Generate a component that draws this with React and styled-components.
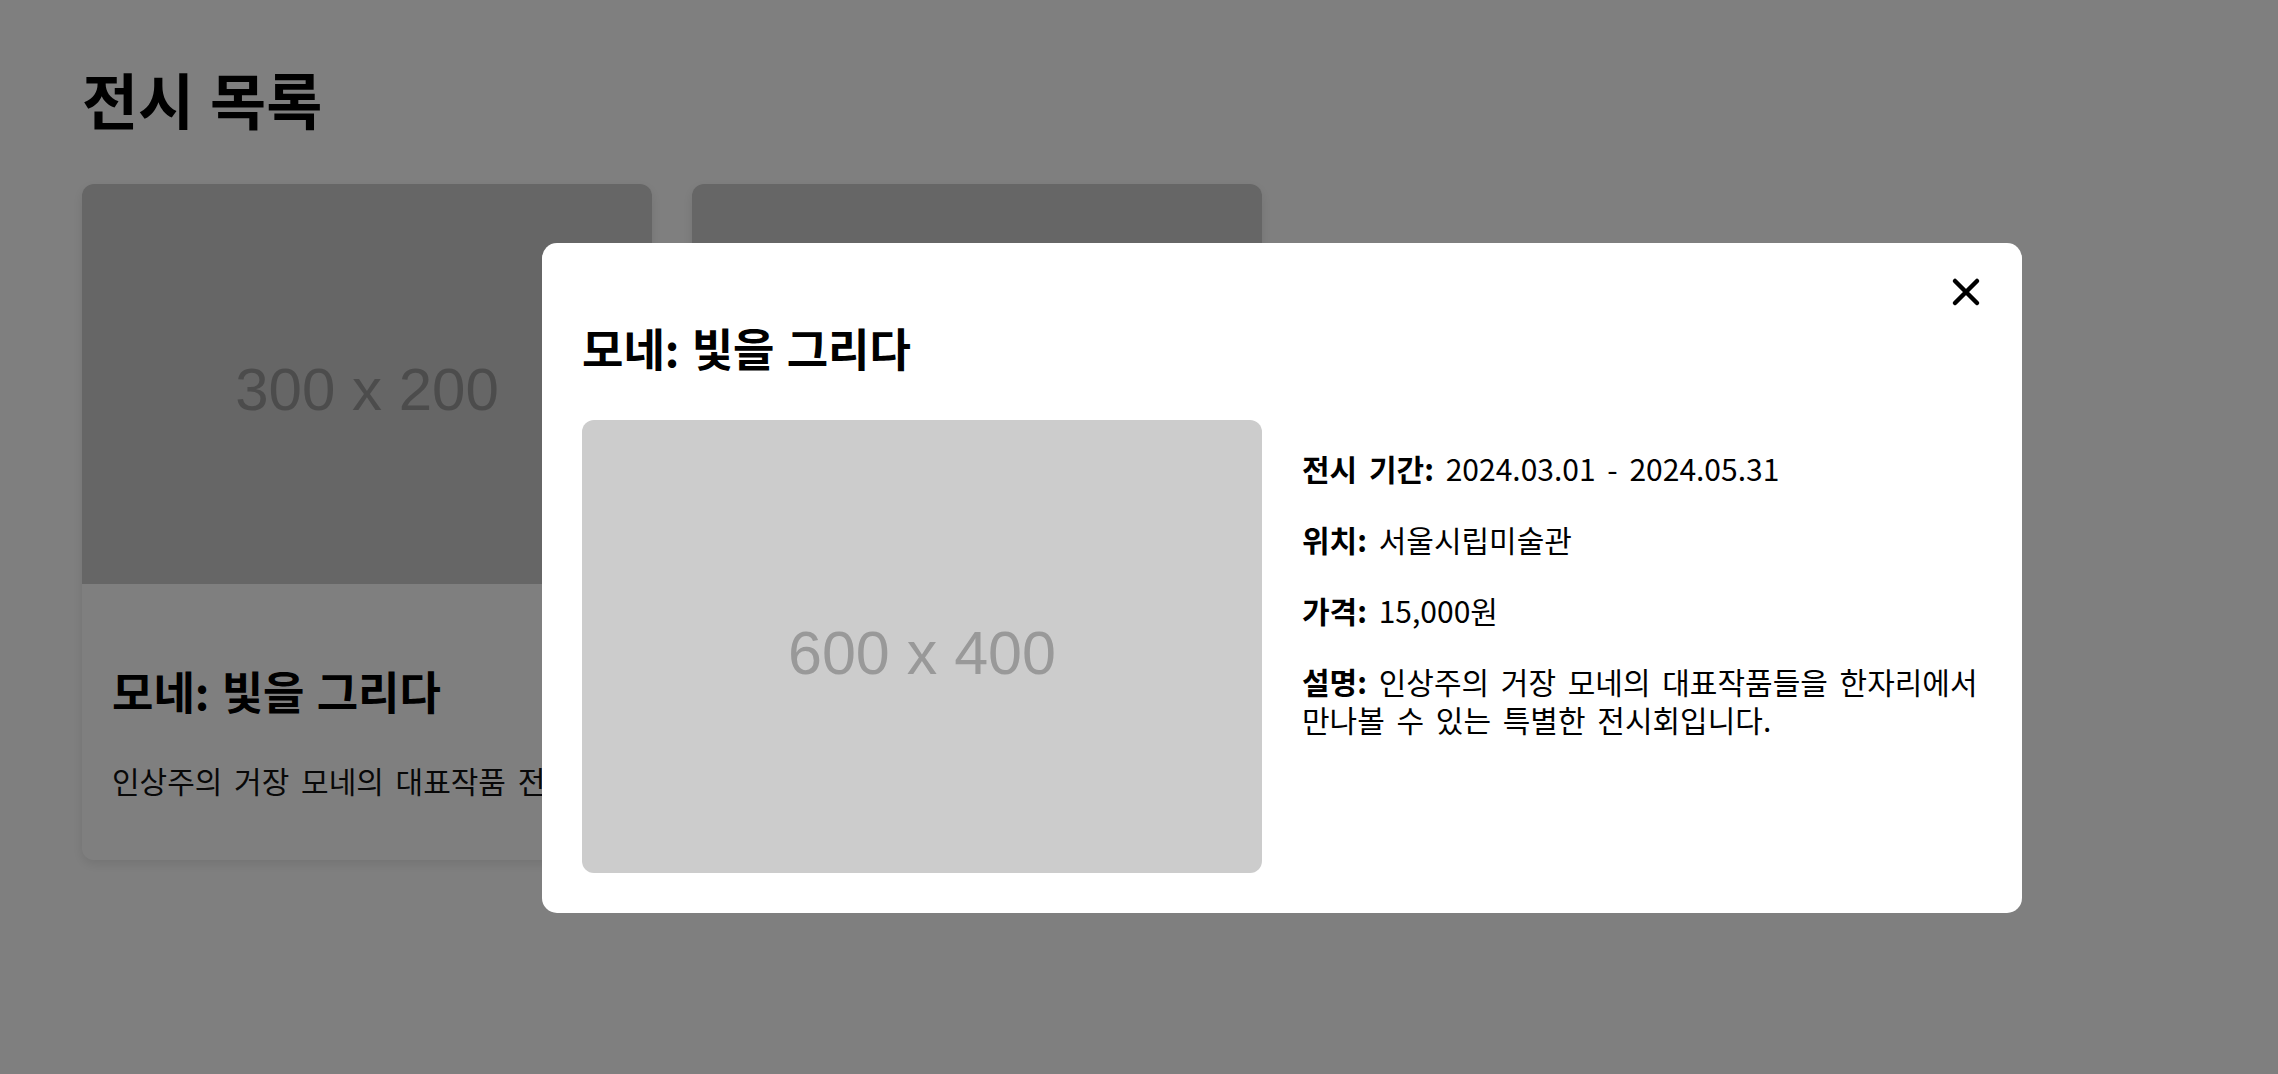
import React, { useState } from "react";
import styled, { createGlobalStyle } from "styled-components";

const exhibitions = [
  {
    id: 1,
    title: "모네: 빛을 그리다",
    summary: "인상주의 거장 모네의 대표작품 전시",
    period: "2024.03.01 - 2024.05.31",
    place: "서울시립미술관",
    price: "15,000원",
    description:
      "인상주의 거장 모네의 대표작품들을 한자리에서 만나볼 수 있는 특별한 전시회입니다."
  },
  {
    id: 2,
    title: "고흐: 별이 빛나는 밤",
    summary: "후기 인상주의 화가 반 고흐의 작품 세계",
    period: "2024.04.10 - 2024.07.14",
    place: "국립현대미술관",
    price: "18,000원",
    description: "반 고흐의 대표작과 편지를 함께 살펴보는 전시회입니다."
  }
];

const GlobalStyle = createGlobalStyle`
  * {
    box-sizing: border-box;
  }
  body {
    margin: 0;
    background: #fff;
    color: #000;
    font-family: "Noto Sans CJK KR", "Noto Sans", sans-serif;
  }
`;

const Page = styled.div`
  padding: 63px 82px;
`;

const Heading = styled.h1`
  margin: 0 0 49px;
  font-size: 61px;
  line-height: 72px;
  font-weight: 700;
  word-spacing: 2px;
`;

const CardGrid = styled.div`
  display: grid;
  grid-template-columns: repeat(auto-fill, 570px);
  gap: 40px;
`;

const Card = styled.div`
  background: #fff;
  border-radius: 12px;
  overflow: hidden;
  box-shadow: 0 4px 12px rgba(0, 0, 0, 0.1);
  cursor: pointer;
`;

const Placeholder = styled.div`
  display: flex;
  align-items: center;
  justify-content: center;
  height: ${({ h }) => h || "400px"};
  padding-top: ${({ nudge }) => nudge || "10px"};
  background: #ccc;
  color: #999;
  font-family: "Liberation Sans", Arial, sans-serif;
  font-size: ${({ size }) => size || "60px"};
  border-radius: ${({ round }) => (round ? "12px" : "0")};
`;

const CardBody = styled.div`
  padding: 30px;
`;

const CardTitle = styled.h3`
  margin: 49px 0 0;
  font-size: 45px;
  line-height: 56px;
  font-weight: 700;
  word-spacing: 2px;
`;

const CardText = styled.p`
  margin: 41px 0 30px;
  font-size: 30px;
  line-height: 40px;
  word-spacing: 5px;
  color: #111;
  white-space: nowrap;
`;

const Overlay = styled.div`
  position: fixed;
  inset: 0;
  display: flex;
  align-items: center;
  justify-content: center;
  padding: 82px 0 0 286px;
  background: rgba(0, 0, 0, 0.5);
`;

const Modal = styled.div`
  position: relative;
  width: 1480px;
  padding: 40px;
  background: #fff;
  border-radius: 15px;
`;

const CloseButton = styled.button`
  position: absolute;
  top: 29px;
  right: 36px;
  width: 40px;
  height: 40px;
  padding: 0;
  border: none;
  background: none;
  cursor: pointer;
  svg {
    display: block;
  }
`;

const ModalTitle = styled.h2`
  margin: 37px 0 44px;
  font-size: 45px;
  line-height: 56px;
  font-weight: 700;
  word-spacing: 2px;
`;

const ModalContent = styled.div`
  display: grid;
  grid-template-columns: 1fr 1fr;
  gap: 40px;
`;

const DetailList = styled.div`
  display: flex;
  flex-direction: column;
  gap: 33px;
  padding-top: 29px;
`;

const Detail = styled.p`
  margin: 0;
  font-size: 30px;
  line-height: 38px;
  word-spacing: 5px;

  strong {
    font-weight: 700;
  }
`;

const CloseIcon = () => (
  <svg width="40" height="40" viewBox="0 0 40 40">
    <path
      d="M9 9 L31 31 M31 9 L9 31"
      stroke="#000"
      strokeWidth="4.5"
      strokeLinecap="round"
      fill="none"
    />
  </svg>
);

export default function App() {
  const [selected, setSelected] = useState(exhibitions[0]);

  return (
    <>
      <GlobalStyle />
      <Page>
        <Heading>전시 목록</Heading>
        <CardGrid>
          {exhibitions.map(item => (
            <Card key={item.id} onClick={() => setSelected(item)}>
              <Placeholder>300 x 200</Placeholder>
              <CardBody>
                <CardTitle>{item.title}</CardTitle>
                <CardText>{item.summary}</CardText>
              </CardBody>
            </Card>
          ))}
        </CardGrid>
      </Page>

      {selected && (
        <Overlay onClick={() => setSelected(null)}>
          <Modal onClick={e => e.stopPropagation()}>
            <CloseButton onClick={() => setSelected(null)} aria-label="닫기">
              <CloseIcon />
            </CloseButton>
            <ModalTitle>{selected.title}</ModalTitle>
            <ModalContent>
              <Placeholder h="453px" size="61px" nudge="12px" round>
                600 x 400
              </Placeholder>
              <DetailList>
                <Detail>
                  <strong>전시 기간:</strong> {selected.period}
                </Detail>
                <Detail>
                  <strong>위치:</strong> {selected.place}
                </Detail>
                <Detail>
                  <strong>가격:</strong> {selected.price}
                </Detail>
                <Detail>
                  <strong>설명:</strong> {selected.description}
                </Detail>
              </DetailList>
            </ModalContent>
          </Modal>
        </Overlay>
      )}
    </>
  );
}
